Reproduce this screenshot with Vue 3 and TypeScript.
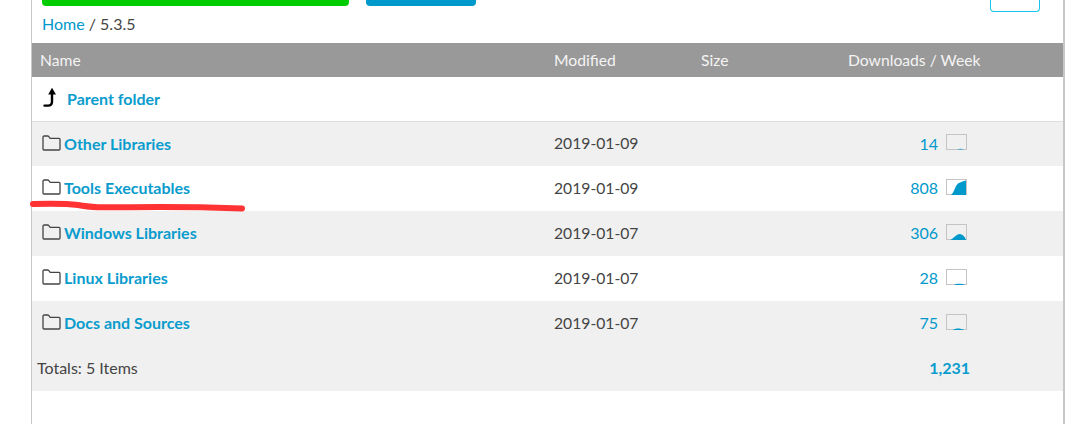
<template>
  <div class="page">
    <div class="panel">
      <div class="top">
        <div class="actions">
          <span class="btn-green"></span>
          <span class="btn-blue"></span>
          <span class="btn-outline"></span>
        </div>
        <div class="crumbs"><a class="link">Home</a> / 5.3.5</div>
      </div>

      <div class="row head">
        <span class="c-name">Name</span>
        <span>Modified</span>
        <span>Size</span>
        <span>Downloads / Week</span>
      </div>

      <div class="parent">
        <svg class="up" width="16" height="22" viewBox="0 0 16 22">
          <path d="M1.500 18.600h3.600c2.600 0 3.900-1.400 3.900-3.800V6" fill="none" stroke="#000" stroke-width="2.400" stroke-linecap="round" />
          <path d="M9 .8 13 7.600H5.200Z" fill="#000" />
        </svg>
        <a class="link strong">Parent folder</a>
      </div>

      <div v-for="(f, i) in folders" :key="f.name" class="row item" :class="{ odd: f.odd, first: i === 0 }">
        <span class="c-name folder">
          <svg width="19" height="16" viewBox="0 0 19 16">
            <path d="M1 14V2.200C1 1.500 1.400 1 2.100 1h3.600c.5 0 .8.2 1.100.6L8.200 3.400H17c.6 0 1 .4 1 1V14c0 .6-.4 1-1 1H2c-.6 0-1-.4-1-1Z" fill="none" stroke="#444" stroke-width="1.300" />
          </svg>
          <a class="link strong">{{ f.name }}</a>
        </span>
        <span class="date">{{ f.date }}</span>
        <span></span>
        <span class="dl">
          <a class="link count">{{ f.count }}</a>
          <svg class="spark" width="21" height="16" viewBox="0 0 21 16">
            <rect x=".5" y=".5" width="20" height="15" :fill="f.odd ? '#f0f0f0' : '#fff'" stroke="#c4c4c4" />
            <path :d="f.spark" fill="#0099cc" />
          </svg>
        </span>
      </div>

      <div class="row totals">
        <span class="c-totals">Totals: 5 Items</span>
        <span></span>
        <span></span>
        <span class="sum">1,231</span>
      </div>

      <svg class="scribble" width="216" height="16" viewBox="0 0 216 16">
        <path d="M3 5C18 4.600 34 4.200 48 6 60 8.500 72 8.500 100 8.200 130 7.800 170 8 212 9.500" fill="none" stroke="#f33" stroke-width="6" stroke-linecap="round" />
      </svg>
    </div>
  </div>
</template>

<script setup lang="ts">
interface Folder {
  name: string;
  date: string;
  count: number;
  odd: boolean;
  spark: string;
}

const folders: Folder[] = [
  { name: 'Other Libraries', date: '2019-01-09', count: 14, odd: true, spark: 'M11 15.500c2-1 5-1 7 0Z' },
  { name: 'Tools Executables', date: '2019-01-09', count: 808, odd: false, spark: 'M5 16c3-2 4-9 7-11.500 3-1.500 5-2.500 8-3V16Z' },
  { name: 'Windows Libraries', date: '2019-01-07', count: 306, odd: true, spark: 'M4 16c3-1 6-6 10-6 3 .5 5 3 6 6Z' },
  { name: 'Linux Libraries', date: '2019-01-07', count: 28, odd: false, spark: 'M8 16c2-1.600 8-1.600 11 0Z' },
  { name: 'Docs and Sources', date: '2019-01-07', count: 75, odd: true, spark: 'M7 16c2-2 8-2 11 0Z' }
];
</script>

<style>
html,
body {
  margin: 0;
  background: #fff;
}
</style>

<style scoped>
.page {
  width: 1077px;
  height: 424px;
  overflow: hidden;
  font-family: Lato, "Liberation Sans", sans-serif;
  font-size: 16px;
  color: #444;
}

.panel {
  position: relative;
  box-sizing: border-box;
  width: 1034px;
  height: 424px;
  margin-left: 31px;
  border-left: 1px solid #c8c8c8;
  border-right: 2px solid #c8c8c8;
}

.top {
  height: 43px;
  padding-left: 10px;
}

.actions {
  display: flex;
  height: 16px;
  align-items: flex-start;
}

.btn-green {
  width: 307px;
  height: 6px;
  background: #00cc00;
  border-radius: 0 0 4px 4px;
}

.btn-blue {
  width: 110px;
  height: 6px;
  margin-left: 17px;
  background: #0099cc;
  border-radius: 0 0 4px 4px;
}

.btn-outline {
  box-sizing: border-box;
  width: 50px;
  height: 12px;
  margin-left: 514px;
  background: #fff;
  border: 1px solid #19c3ee;
  border-top: 0;
  border-radius: 0 0 4px 4px;
}

.crumbs {
  line-height: 16px;
}

.link {
  color: #0099cc;
  text-decoration: none;
}

.strong {
  font-weight: 700;
  color: #0a9ccd;
}

.row {
  display: grid;
  grid-template-columns: 522px 147px 147px 1fr;
  align-items: center;
  box-sizing: border-box;
  padding-bottom: 2px;
}

.head {
  height: 34px;
  padding-bottom: 0;
  background: #999;
  color: #f4f4f4;
  font-size: 15.7px;
}

.date {
  font-size: 15.7px;
}

.c-name {
  padding-left: 8px;
}

.parent {
  display: flex;
  align-items: center;
  box-sizing: border-box;
  height: 45px;
  padding-left: 11px;
  padding-bottom: 2px;
  border-bottom: 1px solid #ddd;
}

.up {
  margin-right: 8px;
}

.item {
  height: 45px;
  background: #fff;
}

.item.first {
  height: 44px;
}

.odd {
  background: #f0f0f0;
}

.folder {
  display: flex;
  align-items: center;
  gap: 3px;
  padding-left: 10px;
}

.folder svg {
  margin-top: -1px;
}

.dl {
  display: flex;
  align-items: center;
  justify-content: flex-end;
  width: 119px;
}

.count {
  margin-right: 8px;
}

.spark {
  margin-top: -2px;
}

.totals {
  height: 45px;
  background: #f0f0f0;
}

.c-totals {
  padding-left: 5px;
  color: #444;
}

.sum {
  width: 122px;
  text-align: right;
  font-weight: 700;
  color: #0a9ccd;
}

.scribble {
  position: absolute;
  left: -2px;
  top: 199px;
}
</style>
